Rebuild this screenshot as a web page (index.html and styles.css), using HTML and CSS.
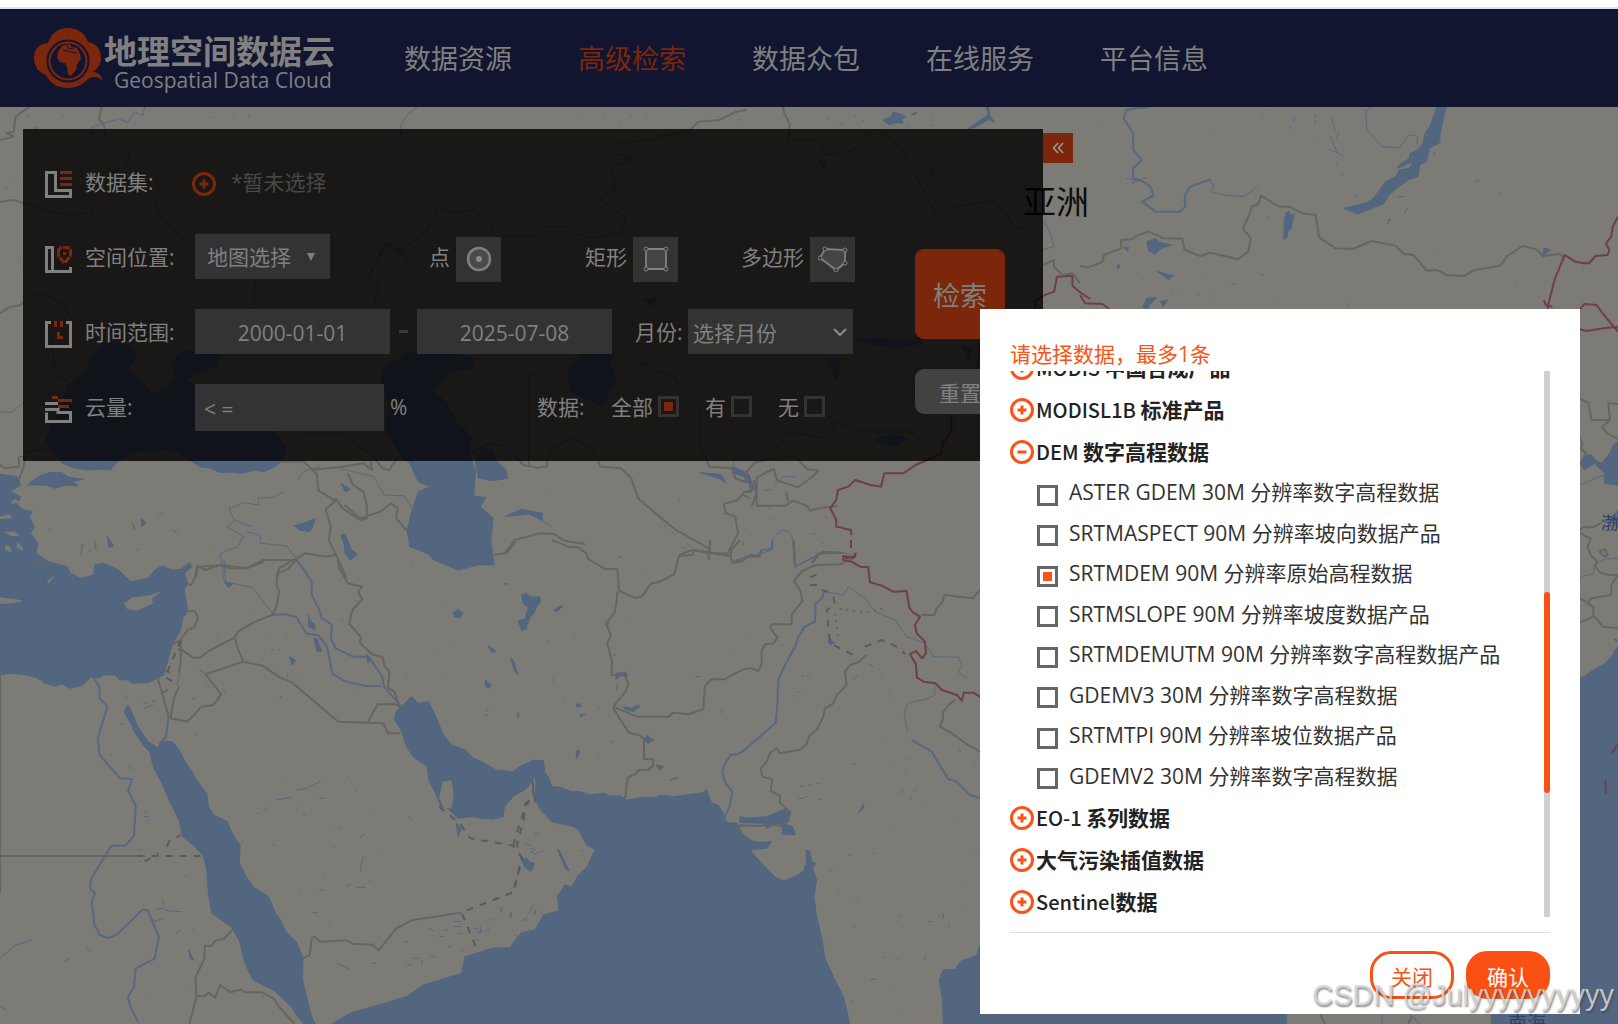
FILE: index.html
```html
<!DOCTYPE html>
<html lang="zh-CN">
<head>
<meta charset="utf-8">
<title>地理空间数据云</title>
<link rel="stylesheet" href="styles.css">
</head>
<body>
<svg class="sprite" aria-hidden="true">
  <symbol id="plus" viewBox="0 0 24 24"><circle cx="12" cy="12" r="10.500" fill="none" stroke="currentColor" stroke-width="3"/><path d="M12 7.500v9M7.500 12h9" fill="none" stroke="currentColor" stroke-width="3"/></symbol>
  <symbol id="minus" viewBox="0 0 24 24"><circle cx="12" cy="12" r="10.500" fill="none" stroke="currentColor" stroke-width="3"/><path d="M7.500 12h9" fill="none" stroke="currentColor" stroke-width="3"/></symbol>
</svg>
<header class="topbar">
  <a class="logo" href="#">
    <svg class="logo-mark" viewBox="0 0 70 60" aria-hidden="true">
      <path fill="#7c270b" d="M14 15C17 5 25 0 34 0s17 5 20 14c8 1 13 7 13 16 0 6-3 10-8 14 5 0 8 3 10 9-4-4-9-5-14-3-5 6-12 10-21 10-11 0-18-5-22-13C4 44 0 38 0 30c0-9 5-14 14-15z"/>
      <circle cx="34" cy="33" r="20.500" fill="none" stroke="#111530" stroke-width="2"/>
      <circle cx="34" cy="33" r="17.500" fill="#111530"/>
      <path fill="#7c270b" d="M24 24l4-6 7-2 3 3 5 1 3 6 1 5-4 5-1 6-5 6-3-2-1-7-2-4-5-1-3-4z"/>
      <path d="M33 17l2 4 5-1M29 22l7 2 7 1" stroke="#111530" fill="none"/>
    </svg>
    <span class="logo-text"><span class="logo-cn">地理空间数据云</span><span class="logo-en">Geospatial Data Cloud</span></span>
  </a>
  <nav class="nav">
    <a href="#">数据资源</a>
    <a href="#" class="active">高级检索</a>
    <a href="#">数据众包</a>
    <a href="#">在线服务</a>
    <a href="#">平台信息</a>
  </nav>
</header>
<main class="stage">
  <svg class="map" viewBox="0 107 1618 917" preserveAspectRatio="xMinYMin slice" aria-hidden="true">
    <!-- Black Sea, Caspian, Anatolia -->
    <g transform="translate(0 240) scale(.3444 .3333)">
      <g class="water">
        <path d="M80 735L95 722 120 705 150 697 180 698 200 712 243 718 210 724 228 738 190 735 160 745 130 735Z"/>
        <path d="M130 600L150 560 180 500 195 440 240 400 270 350 300 310 350 310 380 320 400 350 370 390 420 430 440 465 480 440 510 420 500 370 520 340 560 330 640 345 630 380 570 400 540 420 600 450 700 500 800 580 828 620 822 662 790 685 765 695 740 690 700 701 670 696 640 698 610 684 580 680 550 660 500 630 400 635 345 660 320 690 290 688 250 690 210 682 180 670Z"/>
        <path d="M1105 420L1120 380 1180 340 1250 330 1370 350 1375 385 1300 395 1280 430 1255 455 1290 480 1330 550 1370 590 1360 640 1381 690 1375 768 1410 773 1395 800 1432 835 1425 900 1435 975 1390 975 1330 990 1260 960 1240 940 1190 920 1182 870 1200 800 1215 755 1250 740 1215 725 1190 670 1165 650 1120 570 1130 500Z"/>
        <path d="M1380 665L1400 625 1430 630 1440 660 1470 690 1475 715 1430 722 1390 715Z"/>
        <path d="M855 858L885 848 915 836 910 856 900 875 870 870ZM990 885l12-2 8 20 10 25 17 15-20 18-15-20-3-30ZM990 730l28 18-15 8ZM1465 830l50-22 60 12v22l-40-20ZM410 835l14 15-12 10ZM385 850l6 18ZM312 890l18 28-14 4ZM240 915l-6 30M275 900l4 30M500 868l14 12"/>
      </g>
      <g class="river">
        <path d="M0 515L35 517 65 490 140 475 155 350M820 757L795 772 750 775 750 795 710 788 665 805 680 840 660 860 707 890 690 920 640 940 650 1020M680 840L730 860M715 875L755 885 757 910 832 918 860 955 900 1020M865 720l15-25 50-15M985 685L1085 710 1115 765 1175 768 1200 810"/>
      </g>
      <g class="speck"><path d="M230 915h14M255 938l10-6M140 868l8 4M400 925v8M460 822h12M620 912v5M40 960l20 8 8 20M20 930l30 18M50 900l30 10M15 985l18 16"/></g>
      <g class="border">
        <path d="M0 220L30 200 60 195 85 165 130 160 190 200 210 240M150 290l10 110 60 40M75 640l55-15 30 10M0 675l15 10 40-5V650h20l-8 35-12 35M820 665l60-2 25 25 15 15 5 50 50 30-30 25 15 50-5 45 25 50 25 60M905 690l90-10 60-10 25 20-5-30M1010 700l15 35 30 20 10 40 0 40-20 5-50-35-20-30M1000 795l45 40 60-20 30-25 20 15-5 30 30 35M1435 945l30-5 30-40 73-20M570 1010l5-30 70-5 70 10 50-25 90 0 30-20 60 10 30-5M805 1015l5-30 50-30M880 580l110 0 30 25 60 40 30 40 20 5 25-40M1370 640l50-30 50 10 50 55 48 10M1535 680V410l33-10"/>
        <path d="M740 120l-5 90M1180 40l-60-30-50 100 30 30-15 60"/>
      </g>
    </g>
    <!-- Northern Kazakhstan, under the panel -->
    <g transform="translate(0 0) scale(.3444 .3333)">
      <g class="border"><path d="M85 321L45 350 40 395 20 400 40 410 0 420M295 321l-8 35 15 20 5 40M0 605l40-5 60 20 40 15 70 10 60-10M305 415l30 10 40 40-5 30-40 20-20-10M450 590l10 60 60 50 30 40M1070 830l50-100 60 40-5 20M1180 740l60-50 30-70 40 15 70-5 40 40 20 40h120"/></g>
      <g class="river"><path d="M420 321l-5 25-25-10-20 32-25-12-80 26-5 110 5 120 10 70M1215 321l-30 20-20 35 -5 40 25 60M1070 620l-40 70-40 200"/></g>
      <g class="speck"><path d="M85 345l-8 12M98 384h12M182 348h6M620 352h5M675 352h5M720 348h6M14 558l6 8M46 540v5M60 788v5"/></g>
    </g>
    <g transform="translate(540 0) scale(.3444 .3333)">
      <g class="water"><path d="M995 360L1020 350 1025 335 1055 345 1062 352 1050 358 1055 370 1030 368 1015 375ZM1078 342l18-6-10 10ZM1295 321h8l3 25 14 22-16-10-40 24-25 8 5-6 50-34 8-10ZM810 480l20 10-5 15ZM1130 505l15 20-15 0Z"/></g>
      <g class="border"><path d="M0 680h80l20 20 50 15 90-20 10-40-80-60 50-30-15-60 65-30-55-15 10-30 90-10 120-30 25-25 60-5 50-25 30-5M705 321l5 20 15 30-5 50 90 0 20 45 80-15 50-60 30 0 60 60 100 190 20-30 30 10 120-20 60 80 60 25"/></g>
      <g class="river"><path d="M1240 395l-20 45 60 25 65 15-5 90 70-10M1462 660l20 40 10 40-40 12"/></g>
      <g class="speck"><path d="M125 348h3M182 345h4M232 367h5M260 350h5M305 345h5M408 330h4M530 352h5M578 360h6M745 330h5M835 355l8 6M868 372h8M1140 345v4M1140 358v6M1130 375h5M1065 380h8M912 350h6M936 362h5"/></g>
      <g class="red"><path d="M1440 930l-5-25 30-20 28-10 8-45 45-3 0 30 22 20 30 20"/></g>
      <g class="border"><path d="M1462 795l30-15 0 20 25 25 30-5 21 30"/></g>
    </g>
    <!-- Mongolia and Baikal -->
    <g transform="translate(1080 0) scale(.3431 .3333)">
      <g class="water">
        <path d="M1040 321H1067L1058 360 1050 400 1048 428 1018 445 1010 485 990 495 985 530 960 538 930 560 900 585 885 612 840 630 810 642 768 625 830 610 850 600 870 575 890 545 920 530 930 510 960 505 970 485 925 505 930 495 960 475 962 460 985 450 1000 430 1005 400 1020 380Z"/>
        <path d="M600 640l10-6 0 10 14 0-8 40-10 10-4 20-8 4 2-60ZM195 725l25-10 12 12 35 8-30 10-18 18-18-10-4-12ZM225 815l48 12-15 12ZM195 895l28-2-18 20-10 14-12-5ZM235 905l20-5-12 20ZM128 742h14l-4 12ZM107 795l10 0-5 12ZM1352 745l20 4-22 18ZM900 658l5 0-8 14Z"/>
      </g>
      <g class="river wide"><path d="M200 321L165 325 135 330 127 355 155 400 155 450 180 480 155 505 155 535 185 545 205 560 215 585 182 605 220 635 290 635 307 620 305 590 320 560 382 538"/></g>
      <g class="river"><path d="M135 535l25 5-10 12 20-12 25-8M205 565l10 25-20 8M375 540l15 18-8 18 40 10 58 3 37-30M850 321l-20 15M832 330l5 60 43 50 50 4 30-40 25 5-3 25M733 350l10 45M730 410l18 45 20 15M725 448l25 10M755 395l-8 18"/></g>
      <g class="speck"><path d="M548 330v3M532 345h6M625 352v15M686 345v10M686 362v10M610 380h6M613 407h5M686 410v4M392 407h4M95 384h3M52 370h4M750 485v8M765 520v8M805 585v8M790 575h5M1150 545l15-3M1223 576v8M946 640l8-15M925 590h20M1033 455v8M548 650v8M180 835h5M365 820h4M440 853h14M385 888h8M525 820l12 8M300 880h5M342 884h6M270 880v5M1030 767h4M563 907h4M780 920l10-12M1270 852h4M1465 800v6"/></g>
      <g class="border"><path d="M0 798L25 802 65 785 70 765 120 745 120 720 150 718 170 705 200 695 235 710 240 715 298 716 305 750 350 768 380 758 460 778 490 755 498 715 475 685 495 640 500 620 520 612 527 587 580 620 610 620 650 640 687 645 697 712 745 745 795 747 850 723 920 737 945 762 972 765 1010 812 1040 810 1070 826 1120 828 1150 810 1225 797 1245 768 1290 738 1330 748 1350 768 1395 762 1413 773"/></g>
      <g class="red"><path d="M1568 650l-15 30-5 30-15 20 10 20-5 15-35 3-20 22-15 0-25-5-30-20-30 75-5 20-15 60 5 25M1458 927l12-15 35 3 30 40 33 40M0 885l15 25 50 2 20 15"/></g>
    </g>
    <!-- Central Asia -->
    <g transform="translate(540 220) scale(.3444 .3333)">
      <g class="water"><path d="M90 430L120 400 180 390 215 400 200 430 225 480 200 520 180 560 140 540 90 520 80 470ZM910 360L980 355 1080 365 1100 350 1110 370 1040 385 960 372ZM970 660L1020 640 1070 655 1040 678 1000 675ZM1225 375l30 10-10 35ZM835 420l40-10-15 75ZM300 240l40-10-15 30ZM465 758l60 5 15 25-20-12ZM560 740l45 20 20 55-35-45-30-12Z"/></g>
      <g class="river"><path d="M230 400l60 30 80-10 80 60 50 40 75 115-15 105M680 800l25-30 35 0M650 812l20-3M0 900l35 20M620 1010l50-20 5-35 28-25 20 5 15 30 3 50M800 1000l60-5 50 10"/></g>
      <g class="speck"><path d="M365 915v7M380 935l10 8M405 835v5M590 965v12M610 945h5M668 898h5M665 865h5M30 803v4M228 1012h8M790 942h8M820 970h6M770 738h6M920 787l10-4M828 885l5 12M410 980l14 8"/></g>
      <g class="border">
        <path d="M0 740h20l5-45 60-40 15 0 55 35 20 50 60 5 30 30 20 60 50 45 60 50 95 55 0 35M0 940l40 2 30 20 60 10M405 1005l35-15 55 10 50 0 30-60-8-50-28-10-5-28 40-12 20-25 20-2-5-15M290 430l100 40 30 50 45 35 2 125 25 60 65 5 10 30 30 12 2-30 25-30 50-10 65-10 35 40 35 5-20 20-40 30-60-20-10-35-50 25 0 85 85 0 20-15 40 15 10 15 30-8 50-5M620 780l10 35-15 45M595 815h20M590 825l20 10M715 815l5 30M680 695l40-60 110 20 30-50 60 25 60 5 100 0 40 40"/>
      </g>
      <g class="red"><path d="M1280 360l-10 80-5 60-70 80 0 50-25 40-5 30-40 20-35 15-35 25-55 0-10 40-30-5-45-15-20 20-30 10-5 30-17 25 17 35v20l20 3M880 925l23 5 1 15M903 960v24M915 1000v10l-30 5"/></g>
    </g>
    <!-- Levant, Arabia and the Red Sea -->
    <g transform="translate(0 560) scale(.3444 .3333)">
      <g class="water">
        <path d="M-5 -258L50 -250 60 -225 30 -205 60 -190 50 -165 70 -150 95 -145 85 -130 100 -100 88 -80 110 -50 105 -20 140 5 195 20 205 40 235 55 272 45 275 15 300 10 345 30 380 65 430 55 450 30 470 18 500 30 525 28 550 8 556 22 535 40 545 70 535 90 545 155 530 175 525 210 500 255 485 310 475 345 450 358 430 368 385 370 370 360 345 358 335 345 300 345 285 355 265 350 240 375 205 385 180 372 160 378 130 370 110 355 95 350 60 342 30 340 0 345Z"/>
        <path d="M465 545L500 545 520 570 540 610 558 635 570 660 585 680 600 700 605 740 620 765 660 785 670 810 680 830 697 855 695 910 715 950 740 985 780 1010 800 1060 815 1080 830 1115 860 1145 880 1195 878 1260 895 1330 905 1370 915 1392 890 1400 860 1365 850 1345 800 1295 735 1260 720 1230 708 1200 695 1140 670 1100 615 1060 605 1000 600 930 590 885 555 850 530 830 520 780 500 740 470 670 445 620 435 575 420 560 410 545 390 515 380 490 360 455 372 435 390 475 400 500 430 545 460 565Z"/>
        <path d="M1165 440L1195 410 1215 430 1245 425 1270 480 1285 520 1310 555 1350 570 1375 595 1400 605 1440 630 1490 635 1510 620 1530 610 1550 600 1575 605 1575 760 1558 700 1555 650 1530 685 1490 710 1465 740 1460 770 1430 778 1400 775 1370 770 1330 775 1300 745 1280 740 1265 700 1245 660 1240 620 1200 590 1180 560 1165 510 1145 480 1150 455Z"/>
        <path d="M1315 160l15-12 15 10-10 15-15-2ZM1515 105l10 0 15 10 28-5v20l-20 10-15 50-15 20-12-25 18-8 10-35-15-10ZM895 160l5 20 15 15 0 15-18-10ZM912 235l8 0 14 40-14-2ZM840 290l18 10-10 15ZM650 65l25 8-12 10ZM1410 360l15 15-5 10-12-8ZM1515 895l20 10 17 5-12 22-20-18ZM1418 258l22 15-12 5ZM1485 295l17 42M548 1170l14 30-10-5ZM830 1165l20 12M1325 790l15 15-10 25ZM1064 282l14 15-10 12Z"/>
      </g>
      <g class="land"><path d="M360 130L385 112 420 108 440 105 472 90 440 118 445 130 400 152 370 148ZM0 112L60 120 62 126 30 130 0 132ZM1285 665L1310 660 1317 700 1312 745 1290 745 1275 715ZM-2 -130l30-8 8 12-38 4ZM15 -45l15 5 5 20-20-10ZM50 -55l18 22-5 6-15-12ZM135 65l25-20-18 25ZM30 -175l15-8 12 12-20 3ZM10 -85l35 0 10 12-20 2Z"/></g>
      <g class="river wide"><path d="M270 350l18 30 2 35 22 25-28 95 5 50 60 70 35 2-12 35 22 45-5 90-25 30-40 0-60 100-2 30 14 12-10 25 8 70 15 30 25 10 25-10 75-75 15 2 32 80-12 65-55 30-5 55-18 30 8 30 22 45M860 0l20 25 25 40 0 40 20 40 10 30 30 20-5 40 15 30 50 25 45 0 40 60 5 30 50 60M790 165l40-2 30 8 30 50 35 5 25 35 15 80 35 22 60 15 45 0M490 465l-8 65-17 20"/></g>
      <g class="river"><path d="M650 0l5 65 78 18 60 80M0 1195l45-40 50-15M980 1210l35 18M515 375l8-55"/></g>
      <g class="speck">
        <path d="M985 58h6M1030 122h5M1285 130h4M1300 247h4M1270 270h4M1180 346h4M1295 343h4M1410 450h10M1408 465h10M1503 455v20M1465 70h12M1195 17h4M740 150h4M990 180h5M625 220h6M767 217h4M830 220v6M785 270h10M805 268h10M835 340v12M860 350v4M810 410h8M1028 405h4M555 420l15-8M578 330l15 10M600 375l12 8M570 520v6M635 520h2M645 385l10 12M320 580v6M375 615l6 15M360 405l10 12M415 430l15-2M440 425l15-3M420 445l25-12M350 495l10-5"/>
        <path d="M805 720l40-8M862 690l30-5 40-22M745 760h6M772 740v10M820 665v5M925 715h20M880 765h8M790 855h6M832 840h5M968 860h6M1045 835l15-15M1055 890l-10 45M1005 978l15-4M1035 982h28M1072 970l4-8M940 950h5M870 1000h4M925 990h14M1010 648v5M1035 692v4M1075 755v4M1185 770l12 12M845 600h3M568 600h4M905 1058h18M955 1085v4M1095 887h3M700 845h6M420 755h8M418 770h15M430 780v5M990 800v6M950 795h6M860 740v6"/>
        <path d="M400 870h12M405 905h6M450 1050l20-5 20 8 40 2M470 1020l8 15M445 1085l30-10M510 1120l15-10M555 1105l10 10M185 1205l20-12M250 1165l15 10M438 1212h4M540 945v5M0 1340l20 10M425 1310v5M757 1310h10M788 1360h3M538 1275h4"/>
        <path d="M1175 1145h12M1180 1215h14M1200 1195h16M1225 1200v18M1250 1190h12M1245 1105l15 8M1275 1130h14M1285 1110h18M1315 1100h24M1320 1085h18M1325 1120h18M1375 1105h16M1385 1120l15-8M1395 1100v20M1410 1110h12M1455 1060v-15M1485 1055v18M1535 1060l10-15M1555 1050v15M1520 1080h12M1300 1160h10M1340 1170h10M1380 1140h10M1080 1210h12M1420 1080h10M1495 1125h4M1550 825l10-10M1525 855h15M1540 875l12 5"/>
      </g>
      <g class="border">
        <path d="M540 70l15 5 12-25 5-32 25 12 40-15 30 10 50 0 50-20M860 0l-25 28-30 12-2 35 8 20-10 50-10 20-50 20-50 30-10 18-75 40-25 20h-20l-35-25h-10M545 152l22 2 8 20-12 30-18 5-20 30 0 60-5 40M682 235l10 35 15 35-110 38 45 60-22 32-35 5-40 45-50-10 10-60 15-35M707 305l55 12 50 35 35 15 135 118 85 3 30-55h50l18 8M1070 488l42 2 15 30h35M490 470l-32-115M522 240l-22 15M470 400l18-12M480 330l15 10"/>
        <path d="M980 0l5 25 25 45 42 10-12 15 12 22-30 35-8 40 35 40-5 15 35 35 32 10 5 25 15 20-5 45 20 15 15 50M0 888h400M0 345v655M550 1392l20-80-2-60 25-55 2-40 20 0 10-15 25-5 25-27M570 1308h25l10-10 20 15 14-38 30 22 30-8 12 8 50 0 35 20 15 25 45 50M880 1195l20-10 5-52 10-2 15 14 75-4 20 10 55 3 20 17 50-65 45-25 145-23M100 -5l15 20 30 15"/>
        <path class="dash" d="M400 888h190M420 905l40-25M485 860l5-15 35-20M1275 740l60 50 30 45 125 22 25 35-25 105-150 60 50 125M1490 857l20-70 20-60 20-15-5-50"/>
        <path class="dash" d="M525 240l-32 80-15 30 20 12 15 0"/>
      </g>
    </g>
    <!-- Iran to India -->
    <g transform="translate(500 540) scale(.3333)">
      <g class="water">
        <path d="M105 662L130 662 135 700 145 710 155 740 180 742 215 755 240 755 270 765 310 760 330 768 362 768 380 780 430 772 470 772 480 765 520 770 610 758 620 748 635 790 655 795 672 825 680 848 712 850 730 885 755 903 780 907 815 905 800 925 765 928 750 932 790 975 825 1012 850 1022 885 1010 912 992 920 960 918 930 930 935 935 965 948 970 938 985 950 1020 942 1070 950 1130 965 1190 975 1255 1000 1310 1030 1370 1045 1430 1050 1460 -520 1460 -446 1418 -363 1395 -281 1370 -229 1335 -115 1300 -105 1250 -22 1225 30 1223 50 1195 65 1178 105 1170 130 1125 178 1112 172 1070 195 1035 215 1040 235 1005 262 980 285 928 260 915 235 870 220 860 155 845 115 800 105 770 110 720 80 690Z"/>
        <path d="M720 830L740 835 800 830 860 805 872 815 868 835 850 850 878 860 886 885 846 882 848 865 835 848 800 865 796 850 720 848Z"/>
        <path d="M1440 1215L1430 1245 1410 1255 1385 1262 1365 1288 1330 1290 1318 1320 1328 1380 1330 1460 2360 1460 2360 1400 1440 1400Z"/>
        <path d="M65 165l15-5 10 10 28 2-8 30-10 20-18 15-2 30-15 5-10-30 22-5 15-40-15-8ZM160 212l20-14 8 0-15 16ZM370 500l25 5 20-10 5 5-20 14-25-6ZM432 600l12-15 5 10 14 5-18 10ZM348 400l30-4 5 12-20-2-15 12ZM228 635l8-5 2 10-8 15ZM65 960l15-5 8 12 15 5-10 22-18-12ZM172 930l5 0 30 62-8-2ZM470 675l20 5-12 12ZM510 720l25-8ZM1075 820l15-28 2 10ZM32 355l10 8 10 40-8-8ZM985 305l4-10 15 15-14 4ZM1108 373l12 8ZM230 492h12l0 8h-12ZM240 523h16l-14 8Z"/>
      </g>
      <g class="river wide"><path d="M880 0l5 80 60-30 25-15 30 2M972 155l-5 20-20 15-2 55-30 15-20 30-10 30-30 55-20 45-3 80-5 48-90 80-25 15-20 2-20 30-5 25 10 30 20 25-8 45-30 60M1235 600l60 35 50 82 25 8 40 40 30 10M700 65l40-15 35 0 10-20 30-3 3-25"/></g>
      <g class="river"><path d="M970 155l60 10 15-25 50 35 30 40 60 25 35 50 55 20 25 40 75 2 12 25-12 18 25 22M1305 440v25l-25 12-55 12-13 30 12 60"/></g>
      <g class="speck">
        <path d="M10 132h14M358 52h6M425 102h4M560 10l18 14M135 298l10 10M160 415v10M220 290h5M190 482h4M295 502h5M55 515v22M330 605h8M292 642h5M535 540h6M668 505l-6 15M697 345l6 4M738 295h5M843 315h6M910 405v6M895 455h8M880 468h6M920 410h8M585 410h18M538 240h3M388 232h4M325 245v12M338 322v4M340 345h8M352 430l-4 25M1138 412l6 4M1060 420l14-14M1180 488h4M1210 350h4M1165 452h4"/>
        <path d="M900 738h12M925 735h8M950 730h8M895 775h18M955 778h8M918 770h8M1058 672h12M1145 608h3M1175 668h3M1220 655v6M1215 690h6M1240 755l10-8M1230 780l8-8M1205 750v12M1260 570v5M1380 628v10M1420 680h5M985 992h10M1012 978v3M1045 947h6M1120 940h6M1185 870h4M1280 798h4M1365 835h3M1425 930h8M1065 1083l8 4M1015 1060h4M1060 1160h10M1208 1160l6 5M1200 1128h6M1315 1128h6M1275 1243v18M1150 1252h6M1170 1252h4M1190 1256h8M1110 1318l18 0M1185 1335h5M1055 1385h8M995 1193v4M1085 1402v4M1205 1420v4M1330 1120v15M1345 1155l5 8M1285 1145h12M1380 1107h4M1398 1028v3M1428 1155v3"/>
        <path d="M75 910h8M110 885h8M95 925l12 5M105 945l10-8M118 935h10M0 1100l8 10M30 1120v12M90 1110l15-18M100 1120l10-12M70 1140l12-8M85 1195h4M242 932h6M172 858v6M10 730h4M0 830h12"/>
      </g>
      <g class="border">
        <path d="M20 40L45 5M155 0l50 20 30 2 25 20 5 15 50 30 37 0 5 65 25 12 25 10 20-5 20-30 5-8 25-5 45-22 15-55 40-5 5-15 50 10 35 5 25 5 5 20 30-5 25-20 30 5M630 42v-42M690 50l5-20 25-30M353 155l-8 60-15 20-12 15 15 38-12 20 15 55-1 42 40 2 10 25-8 22-37 46 70 30 95 0 15-12 45 5 45-15 5-70 20-20 40 0 25-15 30-15 25-3 20 8 10-20 0-40 10-20 25-2 12-18-22-30 5-10 60 0 0-30 32-40-5-30-20-30 25-30 40-18 75-2 40-20M340 505l45 72 35 10 12 8 0 62 28 0 0 20-15 12-30 2-10 12-22 10-8 62M880 0l5 80M935 70l25-30 30 0 40-2"/>
        <path d="M1440 150l-22 25-40-5-45-5-5 20-18 20-7 20-40 0M1100 345l-25 22-25 8-15 20 5 40-30 30-10 25-25 15-5 25-20 40-20 15-12 30-20 15-58 10-10-15-20 15-10 25-18 20 5 25 30 8-5 35 28 15 0 20 20 20 5 35-20 15-35-5-30 5-60-2-8 20-15 5M1365 480l-20 15-15 20-2 25-8 20 35 20 50 35 35 20"/>
        <path class="dash" d="M930 112l20-8M930 135h25M965 150l20 5M1000 170l5 25-25 15 10 100 70 35M1095 320l50-20 50 22 20 20M98 725l8 65-30 0-5 50-20 75 15 45-25 90"/>
        <path class="dots" d="M1018 207l80 10 65-15M1005 220l10 80"/>
      </g>
      <g class="red"><path d="M1053 0v24M1068 38l-8 15-30-5 0 12 25 5 25 15 25 2 5 45 35 10 35 18 40-2 8 50 12 15 20 12-15 25 5 25 25 25 3 35-12 15-18-22-18 10 18 30 3 40 20 12 35 5 20 20 45 15 15 18 5-25 30 0 30 20"/></g>
    </g>
    <!-- East China -->
    <g transform="translate(1518 300) scale(.3333)">
      <g class="water"><path d="M186 1135L200 1128 230 1108 262 1090 280 1070 300 1040V2172H-80V1545H186ZM186 490l15-25 20 0 10 15 20 10 25-30 10-25 14-10v130l-40-5 0-30-30-30-30 20ZM300 630l-15 20-18 10 33 20Z"/><path d="M288 1018h8v10M285 1050h8"/></g>
      <g class="river"><path d="M186 555l65-28 20 2M186 842l5-12 35-8 5-30 30-15 39-2"/></g>
      <g class="border"><path d="M186 295l25 15 10 50 55 0-5-50 29 2M276 360l-25 22 20 20 29 15M186 415l8 15-6 15 18 18M186 690l10-8 30 0 25-15M186 700l32 15-10 25 10 25 20 20-8 15 20 20 25 5 25 0M245 755l15-8 10 18-12 5ZM186 967l40-17 0-30-18-10 12-15 60-10 0-30 20-30M186 895l20 10M230 950l25 30 45 5"/></g>
      <g class="red"><path d="M78 0l5 15 20 5M186 88l20 5 50-8 44-5M300 1332l-20 30M263 1442v42"/></g>
    </g>
    <path class="land-fill" d="M1290 1014H1440V1024H1294Z"/>
    <path class="river" d="M1382 1014v10M1410 1014l10 10"/>
    <path class="border" d="M1320 1014l5 10M1408 1024l4-8"/>
    <text class="map-title" x="1023" y="214">亚洲</text>
    <text class="map-sea" x="1601" y="529" font-size="17">渤海</text>
    <text class="map-sea" x="1508" y="1030" font-size="19">南海</text>
  </svg>
  <form class="panel">
    <div class="fields">
      <div class="row">
        <svg class="row-icon" viewBox="0 0 27 27"><path class="g" d="M1.5 1.5H10.5V19.5H25.5V25.5H1.5Z"/><path class="o" d="M15 1.5H27M15 7.5H27M15 13.5H27"/></svg>
        <span class="row-label">数据集:</span>
        <button type="button" class="add" aria-label="添加数据集"><svg><use href="#plus"/></svg></button>
        <span class="hint">*暂未选择</span>
      </div>
      <div class="row">
        <svg class="row-icon" viewBox="0 0 27 27"><path class="g" d="M1.5 1.5H7.5V25.5H1.5ZM7.5 25.5H25.5V21"/><path class="o" d="M13.5 4V10L16 13L19.500 17L23 13L25.500 10V4L23 1.500H16Z" stroke-dasharray="7 1"/><path class="o" d="M18 7.500H21"/></svg>
        <label class="row-label" for="place">空间位置:</label>
        <span class="select place"><select id="place"><option>地图选择</option></select><svg viewBox="0 0 8 8"><path d="M0 0H8L4 8Z" fill="#808080"/></svg></span>
        <div class="tools">
          <label class="tool">点<button type="button" aria-label="点"><svg viewBox="0 0 26 26"><circle cx="13" cy="13" r="11" fill="#4a4a4a" stroke="#808080" stroke-width="2.500"/><circle cx="13" cy="13" r="3" fill="#8a8a8a"/></svg></button></label>
          <label class="tool">矩形<button type="button" aria-label="矩形"><svg viewBox="0 0 26 26"><path d="M3 3H23V23H3Z" fill="#444" stroke="#808080" stroke-width="1.800"/><g fill="#333" stroke="#808080"><circle cx="3" cy="3" r="2"/><circle cx="23" cy="3" r="2"/><circle cx="3" cy="23" r="2"/><circle cx="23" cy="23" r="2"/></g></svg></button></label>
          <label class="tool">多边形<button type="button" aria-label="多边形"><svg class="poly" viewBox="0 0 30 26"><path d="M7 3L27 4V17L18 24L2 12Z" fill="#444" stroke="#808080" stroke-width="1.800"/><g fill="#333" stroke="#808080"><circle cx="7" cy="3" r="2"/><circle cx="27" cy="4" r="2"/><circle cx="27" cy="17" r="2"/><circle cx="18" cy="24" r="2"/><circle cx="2" cy="12" r="2"/></g></svg></button></label>
        </div>
      </div>
      <div class="row">
        <svg class="row-icon" viewBox="0 0 27 27"><path class="g" d="M6 1.500H1.500V25.500H25.500V1.500H21"/><path class="o" d="M10.500 0V6M16.500 0V6M13.500 11V16.500H18"/></svg>
        <label class="row-label" for="from">时间范围:</label>
        <input class="date" id="from" type="text" value="2000-01-01">
        <span class="dash-mark"></span>
        <input class="date" type="text" value="2025-07-08" aria-label="结束日期">
        <label class="month-label" for="month">月份:</label>
        <span class="select month"><select id="month"><option>选择月份</option></select><svg viewBox="0 0 14 8"><path d="M1 1L7 7L13 1" fill="none" stroke="#8c8c8c" stroke-width="2"/></svg></span>
      </div>
      <div class="row">
        <svg class="row-icon" viewBox="0 0 27 27"><path class="g" d="M0 7.500H13M0 13.500H13V16.500H25.500V25.500H1.500V16.500"/><path class="o" d="M7 1.500H13M13 4.500H27M13 10.500H24"/></svg>
        <label class="row-label" for="cloud">云量:</label>
        <input class="cloud" id="cloud" type="text" value="&lt; =">
        <span class="percent">%</span>
        <span class="data-label">数据:</span>
        <label class="pick">全部<input type="checkbox" checked></label>
        <label class="pick">有<input type="checkbox"></label>
        <label class="pick">无<input type="checkbox"></label>
      </div>
    </div>
    <div class="actions">
      <button type="button" class="search">检索</button>
      <button type="button" class="reset">重置</button>
    </div>
  </form>
  <button type="button" class="fold" aria-label="收起"><svg viewBox="0 0 12 12"><path d="M6 1L1.500 6L6 11M11 1L6.500 6L11 11" fill="none" stroke="#999" stroke-width="1.600"/></svg></button>
</main>
<section class="dialog" role="dialog" aria-labelledby="dialog-title">
  <h2 id="dialog-title">请选择数据，最多1条</h2>
  <div class="viewport">
    <div class="tree">
      <button type="button" class="group"><svg><use href="#plus"/></svg><span class="latin">MODIS&nbsp;</span>中国合成产品</button>
      <button type="button" class="group"><svg><use href="#plus"/></svg><span class="latin">MODISL1B&nbsp;</span>标准产品</button>
      <button type="button" class="group"><svg><use href="#minus"/></svg><span class="latin">DEM&nbsp;</span>数字高程数据</button>
      <div class="items">
        <label><input type="checkbox"><span>ASTER GDEM 30M 分辨率数字高程数据</span></label>
        <label><input type="checkbox"><span>SRTMASPECT 90M 分辨率坡向数据产品</span></label>
        <label><input type="checkbox" checked><span>SRTMDEM 90M 分辨率原始高程数据</span></label>
        <label><input type="checkbox"><span>SRTMSLOPE 90M 分辨率坡度数据产品</span></label>
        <label><input type="checkbox"><span>SRTMDEMUTM 90M 分辨率数字高程数据产品</span></label>
        <label><input type="checkbox"><span>GDEMV3 30M 分辨率数字高程数据</span></label>
        <label><input type="checkbox"><span>SRTMTPI 90M 分辨率坡位数据产品</span></label>
        <label><input type="checkbox"><span>GDEMV2 30M 分辨率数字高程数据</span></label>
      </div>
      <button type="button" class="group"><svg><use href="#plus"/></svg><span class="latin">EO-1&nbsp;</span>系列数据</button>
      <button type="button" class="group"><svg><use href="#plus"/></svg>大气污染插值数据</button>
      <button type="button" class="group"><svg><use href="#plus"/></svg><span class="latin">Sentinel</span>数据</button>
    </div>
    <div class="scrollbar"><div class="thumb"></div></div>
  </div>
  <div class="dialog-actions">
    <button type="button" class="close">关闭</button>
    <button type="button" class="confirm">确认</button>
  </div>
</section>
<div class="watermark">CSDN @Julyyyyyyyyyy</div>
</body>
</html>
```
FILE: styles.css
```css
* { box-sizing: border-box; }
body {
  margin: 0;
  min-height: 100vh;
  display: flex;
  flex-direction: column;
  position: relative;
  overflow: hidden;
  font: 21px/30px "Open Sans", "Noto Sans CJK SC", sans-serif;
  color: #808080;
}
button, input, select { font: inherit; color: inherit; border: 0; padding: 0; margin: 0; }
a { color: inherit; text-decoration: none; }
svg { display: block; flex: none; }
.sprite { position: absolute; width: 0; height: 0; }

/* Top bar */
.topbar {
  margin-top: 7px;
  border-top: 2px solid #e4e1e6;
  height: 100px;
  background: #111530;
  display: flex;
  align-items: center;
  padding: 2px 0 0 34px;
}
.logo { display: flex; width: 370px; }
.logo-mark { width: 70px; height: 60px; }
.logo-text { display: flex; flex-direction: column; padding-top: 6px; }
.logo-cn { font-size: 33px; font-weight: 700; line-height: 36px; white-space: nowrap; }
.logo-en { font-size: 21px; line-height: 20px; padding-left: 10px; white-space: nowrap; }
.nav { display: flex; gap: 66px; font-size: 27px; line-height: 40px; white-space: nowrap; }
.nav .active { color: #7c270b; }

/* Map */
.stage { flex: 1; position: relative; display: flex; align-items: flex-start; padding: 22px 0 0 23px; background: #7d7b76; }
.map { position: absolute; inset: 0; width: 100%; height: 100%; }
.map path { vector-effect: non-scaling-stroke; stroke-linejoin: round; }
.water path { fill: #526680; stroke: #526680; stroke-width: 1px; }
.land path, .land-fill { fill: #7d7b76; }
.river, .river path { fill: none; stroke: #566983; stroke-width: 1px; }
.wide path { stroke-width: 2px; }
.speck path { fill: none; stroke: #566983; stroke-width: 1px; }
.border, .border path { fill: none; stroke: #676562; stroke-width: 2px; }
.border .dash { stroke: #5c5a60; stroke-dasharray: 7 7; }
.border .dots { stroke-dasharray: 2 5; }
.red path { fill: none; stroke: #6e3f48; stroke-width: 2px; }
.map-title { font-size: 33px; fill: #0d0d0d; }
.map-sea { fill: #2b4265; }

/* Search panel */
.panel {
  position: relative;
  flex: 0 1 1020px;
  display: flex;
  justify-content: space-between;
  padding: 30px 38px 32px 22px;
  background: rgba(0, 0, 0, .8);
  white-space: nowrap;
}
.fields { display: flex; flex-direction: column; gap: 30px; }
.row { display: flex; align-items: center; height: 45px; }
.row-icon { width: 27px; height: 27px; margin-top: 5px; }
.row-icon path { fill: none; stroke-width: 3; }
.g { stroke: #808080; }
.o { stroke: #7c270b; }
.row-label { width: 110px; margin: 0 0 0 13px; }
.add { width: 24px; height: 24px; margin: 5px 15px 0 -3px; background: none; color: #7c270b; }
.add svg { width: 24px; height: 24px; }
.hint { color: #484846; }
.select { display: grid; height: 45px; background: #333; align-items: center; }
.select select, .select svg { grid-area: 1 / 1; }
.select select { appearance: none; background: none; height: 45px; width: 100%; }
.select svg { justify-self: end; pointer-events: none; }
.place { width: 135px; }
.place select { padding-left: 12px; }
.place svg { width: 8px; height: 8px; margin-right: 15px; }
.tools { display: grid; grid-template-columns: 171px 177px 177px; justify-items: end; }
.tool { display: flex; align-items: center; gap: 6px; }
.tool button { width: 45px; height: 45px; margin-top: 5px; background: #333; display: grid; place-items: center; }
.tool svg { width: 26px; height: 26px; }
.tool .poly { width: 30px; }
.date { width: 195px; height: 45px; background: #333; text-align: center; padding-top: 2px; }
.dash-mark { width: 9px; height: 3px; margin: 0 9px; background: #3a3a3a; }
.month-label { margin: 0 6px 0 23px; width: 47px; }
.month { width: 165px; }
.month select { padding-left: 5px; padding-top: 2px; }
.month svg { width: 14px; height: 8px; margin-right: 6px; }
.cloud { width: 189px; height: 47px; margin-top: 2px; background: #333; padding: 2px 9px 0; margin-right: 6px; }
.percent { width: 147px; }
.data-label { width: 74px; }
.pick { display: flex; align-items: center; gap: 5px; margin-right: 26px; }
input[type="checkbox"] {
  appearance: none;
  flex: none;
  width: 21px;
  height: 21px;
  border: 3px solid #333;
  display: grid;
  place-items: center;
}
input[type="checkbox"]:checked::before { content: ""; width: 9px; height: 9px; background: #7c270b; }
.actions { display: flex; flex-direction: column; gap: 30px; padding-top: 90px; }
.search { width: 90px; height: 90px; padding-top: 4px; border-radius: 9px; background: #7c270b; font-size: 27px; }
.reset { width: 90px; height: 45px; padding-top: 2px; border-radius: 9px; background: #424242; }
.fold { position: relative; width: 30px; height: 30px; margin-top: 4px; background: #7c270b; display: grid; place-items: center; }
.fold svg { width: 12px; height: 12px; }

/* Dataset dialog */
.dialog {
  position: absolute;
  top: 309px;
  right: 38px;
  width: 600px;
  padding: 30px 30px 15px;
  background: #fff;
  color: #333;
}
.dialog h2 { margin: 0; font-size: 21px; font-weight: 400; line-height: 30px; padding-bottom: 2px; color: #f95317; }
.viewport { display: flex; height: 546px; }
.tree { flex: 1; display: flex; flex-direction: column; justify-content: flex-end; gap: 12px; overflow: hidden; }
.group { display: flex; flex: none; align-items: center; height: 30px; background: none; font-weight: 700; color: #222; white-space: nowrap; }
.group svg { width: 24px; height: 24px; margin-right: 2px; color: #f95317; }
.latin { font-family: "Noto Sans CJK SC", sans-serif; font-size: 20px; font-weight: 500; }
.items { flex: none; display: grid; grid-template-rows: repeat(8, 1fr); height: 324px; margin: -6px 0; padding-left: 27px; }
.items label { display: flex; align-items: center; gap: 11px; white-space: nowrap; }
.items span { padding-bottom: 2px; }
.dialog input[type="checkbox"] { border-color: #666; margin-top: 4px; }
.dialog input[type="checkbox"]:checked::before { background: #f95317; }
.scrollbar { width: 6px; background: #d0d0d0; padding-top: 221px; }
.thumb { height: 201px; border-radius: 3px; background: #fa5014; }
.dialog-actions { display: flex; justify-content: flex-end; gap: 12px; margin-top: 15px; padding-top: 18px; border-top: 1px solid #dcdcdc; }
.dialog-actions button { width: 84px; height: 48px; border: 3px solid #fa5014; border-radius: 21px; padding-top: 3px; }
.close { background: #fff; color: #fa5014; }
.confirm { background: #fa5014; color: #fff; }

.watermark {
  position: absolute;
  right: 4px;
  bottom: 11px;
  font: 29px/36px "Liberation Sans", Arial, sans-serif;
  color: rgba(215, 215, 215, .85);
  text-shadow: 1px 2px 2px rgba(60, 60, 60, .6);
  pointer-events: none;
}
```
